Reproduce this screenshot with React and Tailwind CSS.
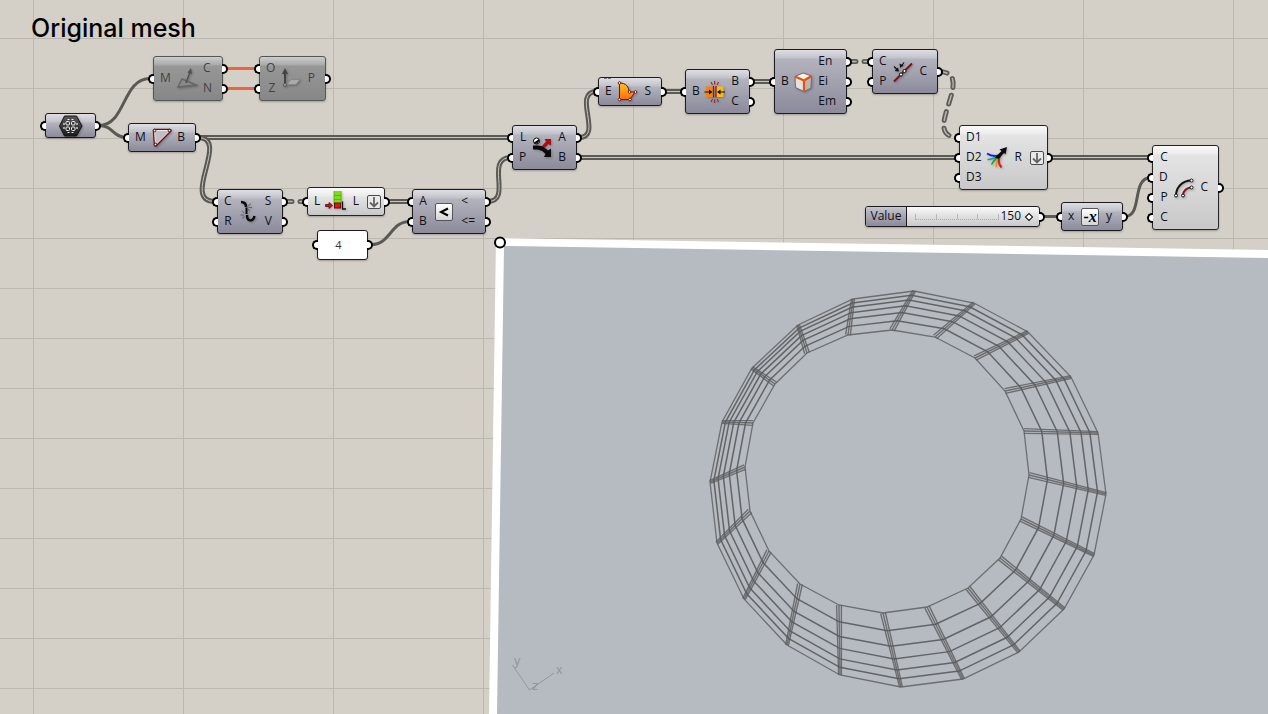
import { useState } from "react";

const SKINS = {
  normal:
    "border-[#1c1c20] text-[#101018] bg-[linear-gradient(#dedee4_0,#c2c2ca_8px,#b3b3bd_9px,#8c8a9b_100%)]",
  light:
    "border-[#242424] text-[#101018] bg-[linear-gradient(#fafafa_0,#ebebeb_8px,#e4e4e4_9px,#c8c8c8_100%)]",
  disabled:
    "border-[#555555] text-[#424242] bg-[linear-gradient(#cdcdcd_0,#a9a9a9_8px,#979797_9px,#878787_100%)]",
};

const WIRES = [
  { kind: "orange", d: "M223 68.5H259" },
  { kind: "orange", d: "M223 88.5H259" },
  { kind: "single", d: "M99 125.5C126 125.5 122 78.5 150 78.5" },
  { kind: "single", d: "M99 125.5C113 125.5 113 137.5 126 137.5" },
  { kind: "double", d: "M196 137.5H512" },
  { kind: "double", d: "M198 137.5C231 137.5 180 201.5 215 201.5" },
  { kind: "dashed", d: "M283 201.5H307" },
  { kind: "double", d: "M385 201.5H412" },
  { kind: "single", d: "M371 244.5C391 244.5 390 221.5 410 221.5" },
  { kind: "double", d: "M488 201.5C513 201.5 484 157.5 511 157.5" },
  { kind: "double", d: "M579 137.5C604 137.5 571 91.5 597 91.5" },
  { kind: "double", d: "M577 157.5H959" },
  { kind: "double", d: "M662 91.5H685" },
  { kind: "double", d: "M750 81.5H774" },
  { kind: "dashed", d: "M847 61.5H872" },
  { kind: "dashed", d: "M938 71.5C980 71.5 917 137.5 959 137.5" },
  { kind: "double", d: "M1048 157.5H1152" },
  { kind: "single", d: "M1040 216.5H1061" },
  { kind: "single", d: "M1125 216.5C1143 216.5 1131 177.5 1151 177.5" },
];

// outer and inner corner of every rib, counter-clockwise from the top
const RIBS = [
  [914, 291, 892, 330],
  [853, 299, 848, 335],
  [798, 325, 807, 353],
  [752, 368, 775, 384],
  [722, 422, 753, 423],
  [710, 482, 745, 467],
  [717, 543, 750, 511],
  [744, 599, 769, 551],
  [787, 645, 800, 584],
  [840, 675, 839, 605],
  [901, 687, 883, 613],
  [963, 679, 927, 607],
  [1019, 652, 968, 588],
  [1064, 609, 1000, 558],
  [1094, 555, 1021, 519],
  [1106, 494, 1029, 475],
  [1098, 433, 1024, 431],
  [1071, 377, 1005, 391],
  [1028, 332, 975, 358],
  [974, 303, 935, 337],
];

const LOOPS = [0, 0.24, 0.45, 0.62, 0.77, 0.89, 1];

function Wire({ kind, d }) {
  if (kind === "orange") {
    return <path d={d} stroke="#f0633a" strokeWidth="3" />;
  }
  if (kind === "single") {
    return <path d={d} stroke="#5a5954" strokeWidth="3" />;
  }
  if (kind === "dashed") {
    return (
      <g strokeLinecap="round" strokeDasharray="9 8">
        <path d={d} stroke="#5d5c57" strokeWidth="5" />
        <path d={d} stroke="#b9b5ad" strokeWidth="1.5" />
      </g>
    );
  }
  return (
    <g>
      <path d={d} stroke="#5a5954" strokeWidth="5" />
      <path d={d} stroke="#c9c5bd" strokeWidth="1" />
    </g>
  );
}

function RingMesh() {
  const loops = LOOPS.map((t) =>
    RIBS.map(([ox, oy, ix, iy]) => `${ix + (ox - ix) * t},${iy + (oy - iy) * t}`).join(" ")
  );

  const ribs = RIBS.flatMap(([ox, oy, ix, iy], i) => {
    const len = Math.hypot(ox - ix, oy - iy);
    const nx = (oy - iy) / len;
    const ny = -(ox - ix) / len;
    return [-1, 0, 1].map((s) => ({
      key: `${i}-${s}`,
      x1: ix + nx * s * 2.4,
      y1: iy + ny * s * 2.4,
      x2: ox + nx * s * 1.4,
      y2: oy + ny * s * 1.4,
    }));
  });

  return (
    <g fill="none" stroke="#5a5b5c">
      {loops.map((points, i) => (
        <polygon
          key={i}
          points={points}
          strokeWidth={i === 0 || i === 6 ? 1.3 : 1.5}
          strokeOpacity={i === 0 || i === 6 ? 0.8 : 0.9}
        />
      ))}
      {ribs.map(({ key, ...line }) => (
        <line key={key} {...line} strokeWidth="1.4" strokeOpacity="0.8" />
      ))}
    </g>
  );
}

function Icon({ children }) {
  return (
    <svg className="size-6 shrink-0 drop-shadow-[1px_1px_1px_rgba(0,0,0,0.25)]" viewBox="0 0 24 24" fill="none">
      {children}
    </svg>
  );
}

const FaceNormalsIcon = () => (
  <Icon>
    <path d="M3 20L7 12L21 18Z" fill="#8a8a8a" stroke="#666" strokeWidth="1.500" />
    <path d="M11 16L15 5" stroke="#505050" strokeWidth="1.500" />
    <path d="M16 1L17 7L12.500 5.500Z" fill="#505050" />
  </Icon>
);

const PlaneNormalIcon = () => (
  <Icon>
    <path d="M7 17.500L11 12.500H20L16 17.500Z" fill="#aaaaaa" stroke="#888" strokeWidth="1" />
    <path d="M5 16V6" stroke="#444" strokeWidth="2" />
    <path d="M5 1L8 7H2Z" fill="#444" />
    <circle cx="5" cy="18" r="1.500" fill="#aaa" stroke="#555" />
  </Icon>
);

const FaceBoundariesIcon = () => (
  <Icon>
    <path d="M4.500 4.500H20L5.500 19Z" fill="#c6c6ca" stroke="#6c0d12" strokeWidth="3.500" strokeLinejoin="round" />
    <path d="M4.500 4.500H20L5.500 19Z" fill="#c0c0c4" stroke="#f3e6e6" strokeWidth="1" />
    <g fill="#fff" stroke="#3c0508">
      <circle cx="4.500" cy="4.500" r="1.300" />
      <circle cx="19.500" cy="4.500" r="1.300" />
      <circle cx="5.500" cy="18.500" r="1.300" />
    </g>
  </Icon>
);

const ExplodeIcon = () => (
  <Icon>
    <path d="M5 2C9 2 10 4 10 7" stroke="#0b0b0b" strokeWidth="2.500" />
    <path d="M10.500 7.500V14" stroke="#0b0b0b" strokeWidth="2" />
    <path d="M11 15C11 22 17 22 18.500 16" stroke="#0b0b0b" strokeWidth="2.500" />
    <path
      d="M12 6L15 3.500M12.500 7.500H16M12 9L14 11M8 13L6 10.500M8 15H4.500M8.500 16.500L6 18.500"
      stroke="#55555c"
      strokeWidth="0.800"
    />
  </Icon>
);

const ListLengthIcon = () => (
  <Icon>
    <rect x="9" y="1" width="7" height="13" fill="#7fdc1d" />
    <path d="M9 1V14M16 1V14M9 5.500H16M9 9.500H16" stroke="#5aa81a" strokeWidth="0.800" />
    <rect x="9.500" y="13" width="6" height="5" fill="#e31616" stroke="#6a0606" />
    <path d="M0.500 14.500H4V12.500L7.500 15.500L4 18.500V16.500H0.500Z" fill="#d51212" stroke="#5e0505" strokeWidth="0.800" />
    <path d="M17.500 11.500V19H21" stroke="#111" strokeWidth="1.300" />
  </Icon>
);

const DispatchIcon = () => (
  <Icon>
    <circle cx="6.500" cy="5" r="3" fill="#fff" stroke="#0b0b0b" />
    <path d="M3.800 6.800A3.300 3.300 0 0 0 9 3Z" fill="#0b0b0b" />
    <path d="M11 11L16 5.500L14.500 3H21V9.500L18.500 8L15 11.500Z" fill="#b10a10" />
    <path d="M3 9.500C10 9 14 10 18 14.500L21 12.500V21H14L15.500 18C12 14 9 13.500 3 13.500Z" fill="#0b0b0b" />
  </Icon>
);

const BoundarySurfaceIcon = () => (
  <Icon>
    <defs>
      <linearGradient id="surface-fill" x1="0" y1="0" x2="0" y2="1">
        <stop offset="0" stopColor="#ffc425" />
        <stop offset="1" stopColor="#ff6d00" />
      </linearGradient>
    </defs>
    <path d="M3.500 3C10 3 13 7 13 12L19 12L14 19.500H3.500Z" fill="url(#surface-fill)" stroke="#6e1408" strokeWidth="1" />
    <g fill="#fff" stroke="#6e0a08" strokeWidth="0.900">
      <circle cx="3.500" cy="3" r="1.300" />
      <circle cx="3.500" cy="19.500" r="1.300" />
      <circle cx="14" cy="19.500" r="1.300" />
      <circle cx="19.500" cy="12" r="1.300" />
      <circle cx="13.500" cy="12" r="1.300" />
    </g>
  </Icon>
);

const BrepJoinIcon = () => (
  <Icon>
    <rect x="2" y="6.500" width="7.500" height="10.500" fill="#f5820d" />
    <rect x="12" y="6.500" width="7.500" height="10.500" fill="#f8b91b" />
    <path d="M9.500 6V17.500M12 6V17.500" stroke="#8c1006" strokeWidth="1.200" />
    <path d="M0.500 12H6M21 12H15" stroke="#111" strokeWidth="1.200" />
    <path d="M5 9.500L8.500 12L5 14.500ZM16.500 9.500L13 12L16.500 14.500Z" fill="#111" />
    <path
      d="M10.700 1V4.500M7 2L8.500 5M14.500 2L13 5M10.700 19.500V23M8.500 19L7 22M13 19L14.500 22"
      stroke="#a01218"
    />
  </Icon>
);

const BrepEdgesIcon = () => (
  <Icon>
    <path d="M12 3L4 6.500L13 10.500L20.500 6Z" fill="#f6f1ea" />
    <path d="M4 6.500L4.500 17.500L13 21.500V10.500Z" fill="#e4e1de" />
    <path d="M13 10.500V21.500L20 18L20.500 6Z" fill="#b9b6b4" />
    <path d="M4 6.500L12 3L20.500 6M4 6.500L4.500 17.500L13 21.500L20 18L20.500 6" stroke="#6f6d6b" strokeWidth="1" />
    <path d="M4 6.500L13 10.500L20.500 6M13 10.500V21.500" stroke="#e8530a" strokeWidth="2.200" strokeLinejoin="round" />
  </Icon>
);

const ClosestPointIcon = () => (
  <Icon>
    <path d="M3 21.500L21 3.500" stroke="#7d1014" strokeWidth="2" />
    <path d="M3 6.500L6 9.500M13 2.500L10.500 6" stroke="#111" strokeWidth="1.200" />
    <path d="M8 11.500L3.500 11L7 7.500ZM9 8L8.500 3.500L12.500 5.500Z" fill="#111" />
    <circle cx="10" cy="14.500" r="1.600" fill="#fff" stroke="#111" />
    <circle cx="13.500" cy="11" r="1.600" fill="#fff" stroke="#111" />
  </Icon>
);

const MergeIcon = () => (
  <Icon>
    <path d="M1 7.500C5 10 8 10.500 13 9.500" stroke="#1c1ce0" strokeWidth="2" />
    <path d="M1.500 13.500C5 13.500 9 12 13 10" stroke="#12a0a0" strokeWidth="1.500" />
    <path d="M5.500 18.500C7 15 10 13 13 10" stroke="#1f9d25" strokeWidth="1.500" />
    <path d="M10 21C10.500 17 11 14 13 10" stroke="#d39a12" strokeWidth="1.500" />
    <path d="M15.500 21.500C12.500 18 12 14 14 10" stroke="#dd1818" strokeWidth="2" />
    <path d="M9 11.500L15.500 5L13.500 3.500L21 1L19.500 8.500L18 7L12.500 13Z" fill="#0b0b0b" />
  </Icon>
);

const OffsetIcon = () => (
  <Icon>
    <path d="M4 19.500C4 11 11 4.500 19 4.500" stroke="#111" strokeWidth="2" />
    <path d="M11 19.500C11 15 15 11.500 19 11.500" stroke="#8a1218" strokeWidth="2" />
    <g fill="#fff" stroke="#111">
      <circle cx="4" cy="19.500" r="1.500" />
      <circle cx="19.500" cy="4.500" r="1.500" />
      <circle cx="11" cy="19.500" r="1.500" />
      <circle cx="19.500" cy="11.500" r="1.500" />
    </g>
  </Icon>
);

const MeshIcon = () => (
  <Icon>
    <defs>
      <linearGradient id="hex-fill" x1="0" y1="0" x2="0" y2="1">
        <stop offset="0" stopColor="#5a5a5a" />
        <stop offset="1" stopColor="#1b1b1b" />
      </linearGradient>
    </defs>
    <path d="M5.500 2H17.500L23 12L17.500 22H5.500L0.500 12Z" fill="url(#hex-fill)" stroke="#151515" />
    <g stroke="#efefef" strokeWidth="1">
      <rect x="7" y="7.500" width="3.500" height="3.500" rx="1" />
      <rect x="12.500" y="7.500" width="3.500" height="3.500" rx="1" />
      <rect x="7" y="13" width="3.500" height="3.500" rx="1" />
      <rect x="12.500" y="13" width="3.500" height="3.500" rx="1" />
      <path d="M8.500 5.500H14.500M8.500 18.500H14.500M5 9V15M18 9V15" strokeWidth="1.200" strokeDasharray="2 2" />
    </g>
  </Icon>
);

const SmallerIcon = () => (
  <span className="flex size-[18px] items-center justify-center rounded-xs border border-[#55555c] bg-linear-to-b from-white to-[#d4d4d4]">
    <svg className="size-3" viewBox="0 0 12 12" fill="none" stroke="#000" strokeWidth="2">
      <path d="M10 2.500L3 6L10 9.500" />
    </svg>
  </span>
);

const NegativeIcon = () => (
  <span className="flex size-[18px] items-center justify-center rounded-xs border border-[#55555c] bg-linear-to-b from-white to-[#d4d4d4] font-['Liberation_Serif',serif] text-base leading-none font-bold text-black italic">
    -x
  </span>
);

const FlattenMark = () => (
  <span className="ml-2 flex size-[14px] items-center justify-center rounded-xs border border-[#4c4c4c] bg-[#e9e9e9]">
    <svg className="size-3" viewBox="0 0 12 12" fill="none" stroke="#666" strokeWidth="1.800">
      <path d="M6 1V10.500M2 6.500L6 10.500L10 6.500" />
    </svg>
  </span>
);

const LeftPort = () => (
  <i className="absolute -left-[6px] h-[10px] w-[6px] rounded-l-full border-2 border-r-0 border-black bg-white" />
);

const RightPort = () => (
  <i className="absolute -right-[6px] h-[10px] w-[6px] rounded-r-full border-2 border-l-0 border-black bg-white" />
);

function Node({ place, skin = "normal", inputs = [], outputs = [], icon, flatten, mark }) {
  return (
    <div className={`absolute flex items-center rounded-[3px] border text-xs shadow-[0_1px_2px_rgba(0,0,0,0.25)] ${SKINS[skin]} ${place}`}>
      {mark && <span className="absolute top-0 left-[5px] h-px w-[7px] border-x-3 border-[#77777c]" />}
      <ul>
        {inputs.map((name, i) => (
          <li key={i} className={`relative flex h-5 items-center justify-end ${name ? "pl-[6px]" : ""}`}>
            <LeftPort />
            <span className="pb-0.5">{name}</span>
          </li>
        ))}
      </ul>
      <div className="flex flex-1 justify-center">{icon}</div>
      <ul>
        {outputs.map((name, i) => (
          <li key={i} className={`relative flex h-5 items-center ${flatten ? "pr-[3px]" : name ? "pr-[10px]" : ""}`}>
            <span className="pb-0.5">{name}</span>
            {flatten && <FlattenMark />}
            <RightPort />
          </li>
        ))}
      </ul>
    </div>
  );
}

function ValueSlider() {
  const [value, setValue] = useState(150);
  return (
    <div className="absolute top-[206px] left-[865px] flex h-[21px] w-[175px] rounded-[3px] border border-[#1c1c20] bg-[linear-gradient(#fafafa,#e2e2e2_45%,#cacaca)] text-xs shadow-[0_1px_2px_rgba(0,0,0,0.25)]">
      <label
        htmlFor="offset-value"
        className="flex w-[41px] items-center justify-center rounded-l-xs border-r border-[#1c1c20] bg-[linear-gradient(#c6c6ce_0,#b0b0ba_6px,#8c8a9b_100%)] pb-0.5 text-[#101018]"
      >
        Value
      </label>
      <div className="grid flex-1 items-center">
        <div className="col-start-1 row-start-1 mr-10 ml-2 flex h-[6px] justify-between border-b border-dotted border-[#aaa]">
          {[0, 1, 2, 3, 4].map((t) => (
            <i key={t} className="w-px bg-[#b8b8b8]" />
          ))}
        </div>
        <output htmlFor="offset-value" className="col-start-1 row-start-1 mr-[18px] justify-self-end pb-0.5 text-[#101018]">
          {value}
        </output>
        <input
          id="offset-value"
          type="range"
          min="0"
          max="150"
          value={value}
          onChange={(e) => setValue(Number(e.target.value))}
          className="col-start-1 row-start-1 mr-[7px] ml-1 h-4 min-w-0 appearance-none bg-transparent [&::-webkit-slider-thumb]:size-[6px] [&::-webkit-slider-thumb]:rotate-45 [&::-webkit-slider-thumb]:appearance-none [&::-webkit-slider-thumb]:border [&::-webkit-slider-thumb]:border-black [&::-webkit-slider-thumb]:bg-white"
        />
      </div>
      <span className="relative flex items-center">
        <RightPort />
      </span>
    </div>
  );
}

function NumberPanel() {
  const [text, setText] = useState("4");
  return (
    <div className="absolute top-[230px] left-[317px] flex h-[30px] w-[51px] items-center rounded-[3px] border border-[#1c1c1c] bg-white shadow-[0_1px_2px_rgba(0,0,0,0.25)]">
      <LeftPort />
      <input
        aria-label="Panel"
        value={text}
        onChange={(e) => setText(e.target.value)}
        className="w-full min-w-0 bg-transparent pr-2 text-center text-[11px] text-[#333] outline-none"
      />
      <RightPort />
    </div>
  );
}

function Viewport() {
  return (
    <section aria-label="Mesh preview">
      <div className="absolute top-[238px] right-0 bottom-0 left-[489px] bg-white [clip-path:polygon(7px_0,100%_12px,100%_100%,0_100%)]" />
      <div className="absolute top-[246px] right-0 bottom-0 left-[497px] bg-[#b6bbc2] [clip-path:polygon(7px_0,100%_12px,100%_100%,0_100%)]" />
      <svg className="absolute top-0 left-0" width="1268" height="714" viewBox="0 0 1268 714">
        <RingMesh />
        <path d="M512.500 665L529.500 690L554 673" fill="none" stroke="#94979b" />
        <g fill="#94979b" fontSize="13" fontFamily="Liberation Sans, sans-serif">
          <text x="514" y="665">y</text>
          <text x="556" y="674">x</text>
          <text x="532" y="690">z</text>
        </g>
        <circle cx="500" cy="242.500" r="5" fill="#fff" stroke="#000" strokeWidth="2" />
      </svg>
    </section>
  );
}

export default function App() {
  return (
    <main className="relative h-screen overflow-hidden bg-[#d4d0c8] bg-[linear-gradient(90deg,#bbb8b0_1px,transparent_1px),linear-gradient(#bbb8b0_1px,transparent_1px)] bg-size-[150px_50px] bg-position-[33px_38px] font-['Open_Sans','Noto_Sans',sans-serif]">
      <h1 className="px-[31px] py-3 font-[family-name:Inter,sans-serif] text-[25px] leading-8 font-medium text-black">
        Original mesh
      </h1>

      <svg className="absolute top-0 left-0" width="1268" height="714" viewBox="0 0 1268 714" fill="none">
        {WIRES.map((w) => (
          <Wire key={w.d} {...w} />
        ))}
      </svg>

      <Node place="left-[45px] top-[113px] w-[51px] h-[25px]" inputs={[""]} outputs={[""]} icon={<MeshIcon />} />
      <Node
        place="left-[153px] top-[56px] w-[70px] h-[45px]"
        skin="disabled"
        inputs={["M"]}
        outputs={["C", "N"]}
        icon={<FaceNormalsIcon />}
      />
      <Node
        place="left-[259px] top-[56px] w-[67px] h-[45px]"
        skin="disabled"
        inputs={["O", "Z"]}
        outputs={["P"]}
        icon={<PlaneNormalIcon />}
      />
      <Node place="left-[128px] top-[123px] w-[68px] h-[29px]" inputs={["M"]} outputs={["B"]} icon={<FaceBoundariesIcon />} />
      <Node place="left-[217px] top-[189px] w-[66px] h-[45px]" inputs={["C", "R"]} outputs={["S", "V"]} icon={<ExplodeIcon />} />
      <Node
        place="left-[307px] top-[187px] w-[78px] h-[29px]"
        skin="light"
        inputs={["L"]}
        outputs={["L"]}
        icon={<ListLengthIcon />}
        flatten
      />
      <NumberPanel />
      <Node place="left-[412px] top-[189px] w-[74px] h-[45px]" inputs={["A", "B"]} outputs={["<", "<="]} icon={<SmallerIcon />} />
      <Node place="left-[512px] top-[125px] w-[65px] h-[45px]" inputs={["L", "P"]} outputs={["A", "B"]} icon={<DispatchIcon />} />
      <Node place="left-[598px] top-[77px] w-[64px] h-[29px]" inputs={["E"]} outputs={["S"]} icon={<BoundarySurfaceIcon />} mark />
      <Node place="left-[685px] top-[69px] w-[65px] h-[45px]" inputs={["B"]} outputs={["B", "C"]} icon={<BrepJoinIcon />} />
      <Node
        place="left-[774px] top-[49px] w-[73px] h-[65px]"
        inputs={["B"]}
        outputs={["En", "Ei", "Em"]}
        icon={<BrepEdgesIcon />}
      />
      <Node place="left-[872px] top-[49px] w-[66px] h-[45px]" inputs={["C", "P"]} outputs={["C"]} icon={<ClosestPointIcon />} />
      <Node
        place="left-[959px] top-[125px] w-[89px] h-[65px]"
        skin="light"
        inputs={["D1", "D2", "D3"]}
        outputs={["R"]}
        icon={<MergeIcon />}
        flatten
      />
      <Node
        place="left-[1152px] top-[145px] w-[67px] h-[85px]"
        skin="light"
        inputs={["C", "D", "P", "C"]}
        outputs={["C"]}
        icon={<OffsetIcon />}
      />
      <ValueSlider />
      <Node place="left-[1061px] top-[202px] w-[62px] h-[29px]" inputs={["x"]} outputs={["y"]} icon={<NegativeIcon />} />

      <Viewport />
    </main>
  );
}
